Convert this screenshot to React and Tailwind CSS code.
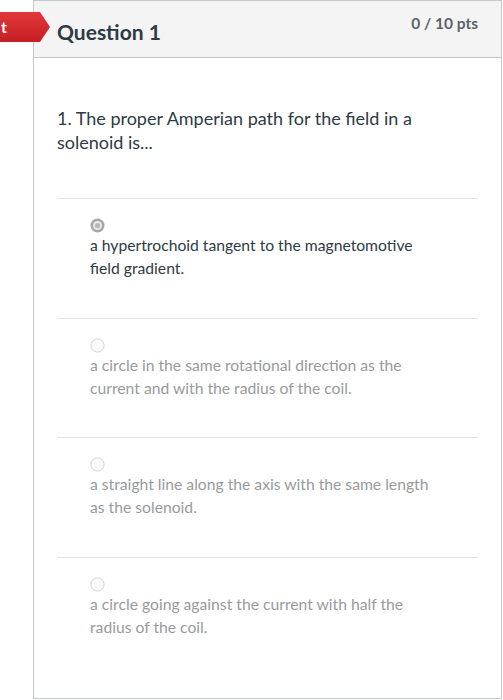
import React from 'react';

const options = [
  { text: ['a hypertrochoid tangent to the magnetomotive', 'field gradient.'], selected: true },
  { text: ['a circle in the same rotational direction as the', 'current and with the radius of the coil.'] },
  { text: ['a straight line along the axis with the same length', 'as the solenoid.'] },
  { text: ['a circle going against the current with half the', 'radius of the coil.'] },
];

function Radio({ selected }) {
  if (selected) {
    return (
      <svg width="15" height="15" viewBox="0 0 15 15">
        <circle cx="7.5" cy="7.5" r="7" fill="#a8a8a8" />
        <circle cx="7.5" cy="7.5" r="4.5" fill="#e9e9e9" />
        <circle cx="7.5" cy="7.5" r="2.6" fill="#b9b9b9" />
      </svg>
    );
  }
  return (
    <svg width="15" height="15" viewBox="0 0 15 15">
      <circle cx="7.5" cy="7.5" r="6.6" fill="#fbfbfb" stroke="#d6d6d6" strokeWidth="1" />
    </svg>
  );
}

export default function App() {
  return (
    <div className="relative w-[503px] h-[700px] bg-white overflow-hidden" style={{ fontFamily: 'Lato, "Open Sans", sans-serif' }}>
      {/* Card */}
      <div className="ml-[33px] w-[469px] h-[699px] border border-[#c4c9cc] flex flex-col">
        {/* Header */}
        <div className="h-[57px] shrink-0 bg-[#f4f4f4] border-b border-[#c4c9cc] flex justify-between pl-[23px] pr-[23px]">
          <div className="pt-[18px] text-[21px] leading-[26px] font-bold text-[#2d3b45]">Question 1</div>
          <div className="pt-[12px] text-[15.5px] leading-[20px] font-bold text-[#5b6367]">0 / 10 pts</div>
        </div>

        {/* Body */}
        <div className="px-[23px] pt-[48px]">
          <div className="text-[18px] leading-[24px] text-[#2d3b45]">
            <div>1. The proper Amperian path for the field in a</div>
            <div>solenoid is...</div>
          </div>
          <div className="mt-[44px]">
            {options.map((o, i) => (
              <div key={i} className="border-t border-[#e2e2e2] pl-[33px] pt-[19px] h-[119.6px]">
                <Radio selected={o.selected} />
                <div className={`text-[15.7px] leading-[23px] mt-[1px] ${o.selected ? 'text-[#2d3b45]' : 'text-[#979b9e]'}`}>
                  {o.text.map((t, j) => (
                    <div key={j}>{t}</div>
                  ))}
                </div>
              </div>
            ))}
          </div>
        </div>
      </div>

      {/* Red tag */}
      <div className="absolute left-0 top-[12px] flex items-stretch h-[30px]">
        <div className="w-[40px] flex items-center pl-[1px] bg-gradient-to-b from-[#e2373a] to-[#c41f24] text-white font-bold text-[16px]">
          <span>t</span>
        </div>
        <svg width="10" height="30" viewBox="0 0 10 30">
          <defs>
            <linearGradient id="tg" x1="0" y1="0" x2="0" y2="1">
              <stop offset="0" stopColor="#e2373a" />
              <stop offset="1" stopColor="#c41f24" />
            </linearGradient>
          </defs>
          <polygon points="0,0 10,15 0,30" fill="url(#tg)" />
        </svg>
      </div>
    </div>
  );
}
